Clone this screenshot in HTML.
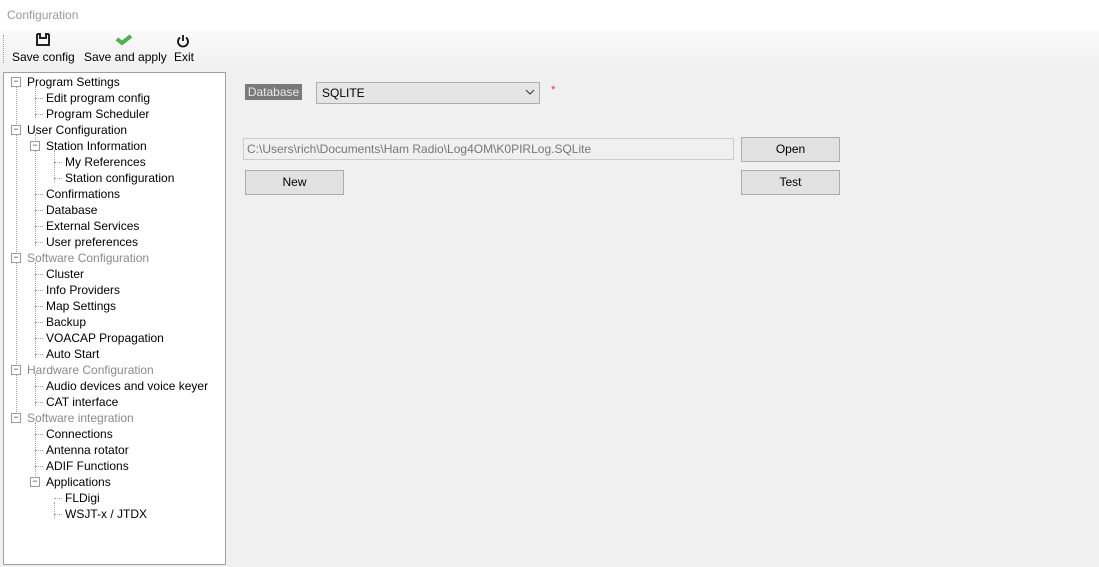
<!DOCTYPE html><html><head><style>
body{margin:0;width:1099px;height:567px;background:#f0f0f0;font-family:"Liberation Sans",sans-serif;font-size:12px;position:relative;overflow:hidden;color:#000}
.a{position:absolute;white-space:nowrap}
.tree{position:absolute;left:3px;top:72px;width:221px;height:491px;background:#fff;border:1px solid #a0a0a0}
.btn{position:absolute;background:#e1e1e1;border:1px solid #adadad;text-align:center;line-height:22px;box-sizing:border-box;height:25px}
.g{color:#8a8a8a}
.box{position:absolute;width:8px;height:8px;border:1px solid #999;background:#fff;font-size:9px;line-height:7px;text-align:center;color:#333}
.vl{position:absolute;border-left:1px dotted #a0a0a0}
.hl{position:absolute;border-top:1px dotted #a0a0a0;width:8px}
</style></head><body>
<div class="a" style="left:0;top:0;width:1099px;height:30px;background:#fff"></div>
<div class="a g" style="left:7px;top:8px;color:#9a9a9a">Configuration</div>
<div class="a" style="left:0;top:30px;width:1099px;height:38px;background:linear-gradient(#fafafa,#f0f0f0)"></div>
<div class="a" style="left:3px;top:35px;height:28px;border-left:1px dotted #999"></div>
<svg class="a" style="left:35px;top:33px" width="16" height="14"><path d="M2 1v11h12V1M2 1h3v4h6V1h3" fill="none" stroke="#222" stroke-width="2"/></svg>
<div class="a" style="left:12px;top:50px">Save config</div>
<svg class="a" style="left:115px;top:34px" width="18" height="12"><path d="M2 5l5 4 9-7" fill="none" stroke="#4caf50" stroke-width="4"/></svg>
<div class="a" style="left:84px;top:50px">Save and apply</div>
<svg class="a" style="left:176px;top:34px" width="14" height="14"><path d="M4 3.5A5 5 0 1 0 10 3.5M7 1v6" fill="none" stroke="#111" stroke-width="1.8"/></svg>
<div class="a" style="left:174px;top:50px">Exit</div>
<div class="tree"></div>
<div id="t"></div>
<div class="a" style="left:245px;top:84px;width:57px;height:16px;background:#7a7a7a;color:#e8e8e8;line-height:16px;text-align:center">Database</div>
<div class="a" style="left:316px;top:82px;width:222px;height:20px;background:#e5e5e5;border:1px solid #adadad;line-height:20px;padding-left:5px;box-sizing:content-box;width:217px">SQLITE</div>
<svg class="a" style="left:525px;top:89px" width="10" height="6"><path d="M1 1l4 4 4-4" fill="none" stroke="#333"/></svg>
<div class="a" style="left:551px;top:84px;color:#d33;font-size:11px">*</div>
<div class="a" style="left:243px;top:138px;width:486px;height:20px;border:1px solid #ccc;line-height:20px;padding-left:3px;color:#777">C:\Users\rich\Documents\Ham Radio\Log4OM\K0PIRLog.SQLite</div>
<div class="btn" style="left:741px;top:137px;width:99px">Open</div>
<div class="btn" style="left:245px;top:170px;width:99px">New</div>
<div class="btn" style="left:741px;top:170px;width:99px">Test</div>
<script>
var it=[[0,"Program Settings",1],[1,"Edit program config"],[1,"Program Scheduler"],[0,"User Configuration",1],[1,"Station Information",1],[2,"My References"],[2,"Station configuration"],[1,"Confirmations"],[1,"Database"],[1,"External Services"],[1,"User preferences"],[0,"Software Configuration",1,1],[1,"Cluster"],[1,"Info Providers"],[1,"Map Settings"],[1,"Backup"],[1,"VOACAP Propagation"],[1,"Auto Start"],[0,"Hardware Configuration",1,1],[1,"Audio devices and voice keyer"],[1,"CAT interface"],[0,"Software integration",1,1],[1,"Connections"],[1,"Antenna rotator"],[1,"ADIF Functions"],[1,"Applications",1],[2,"FLDigi"],[2,"WSJT-x / JTDX"]];
var h="";h+='<div class="vl" style="left:16px;top:86px;height:336px"></div>';
h+='<div class="vl" style="left:35px;top:150px;height:32px"></div><div class="vl" style="left:54px;top:502px;height:16px"></div>';
h+='<div class="vl" style="left:35px;top:86px;height:32px"></div><div class="vl" style="left:35px;top:134px;height:112px"></div><div class="vl" style="left:35px;top:262px;height:96px"></div><div class="vl" style="left:35px;top:374px;height:32px"></div><div class="vl" style="left:35px;top:422px;height:64px"></div><div class="vl" style="left:54px;top:150px;height:32px"></div>';
it.forEach(function(e,i){var y=74+i*16,x=27+e[0]*19;
if(e[2])h+='<div class="box" style="left:'+(x-16)+'px;top:'+(y+3)+'px">−</div>';
else h+='<div class="hl" style="left:'+(x-11)+'px;top:'+(y+8)+'px"></div>';
h+='<div class="a'+(e[3]?' g':'')+'" style="left:'+x+'px;top:'+y+'px;line-height:16px">'+e[1]+'</div>';});
document.getElementById("t").innerHTML=h;
</script>
</body></html>
